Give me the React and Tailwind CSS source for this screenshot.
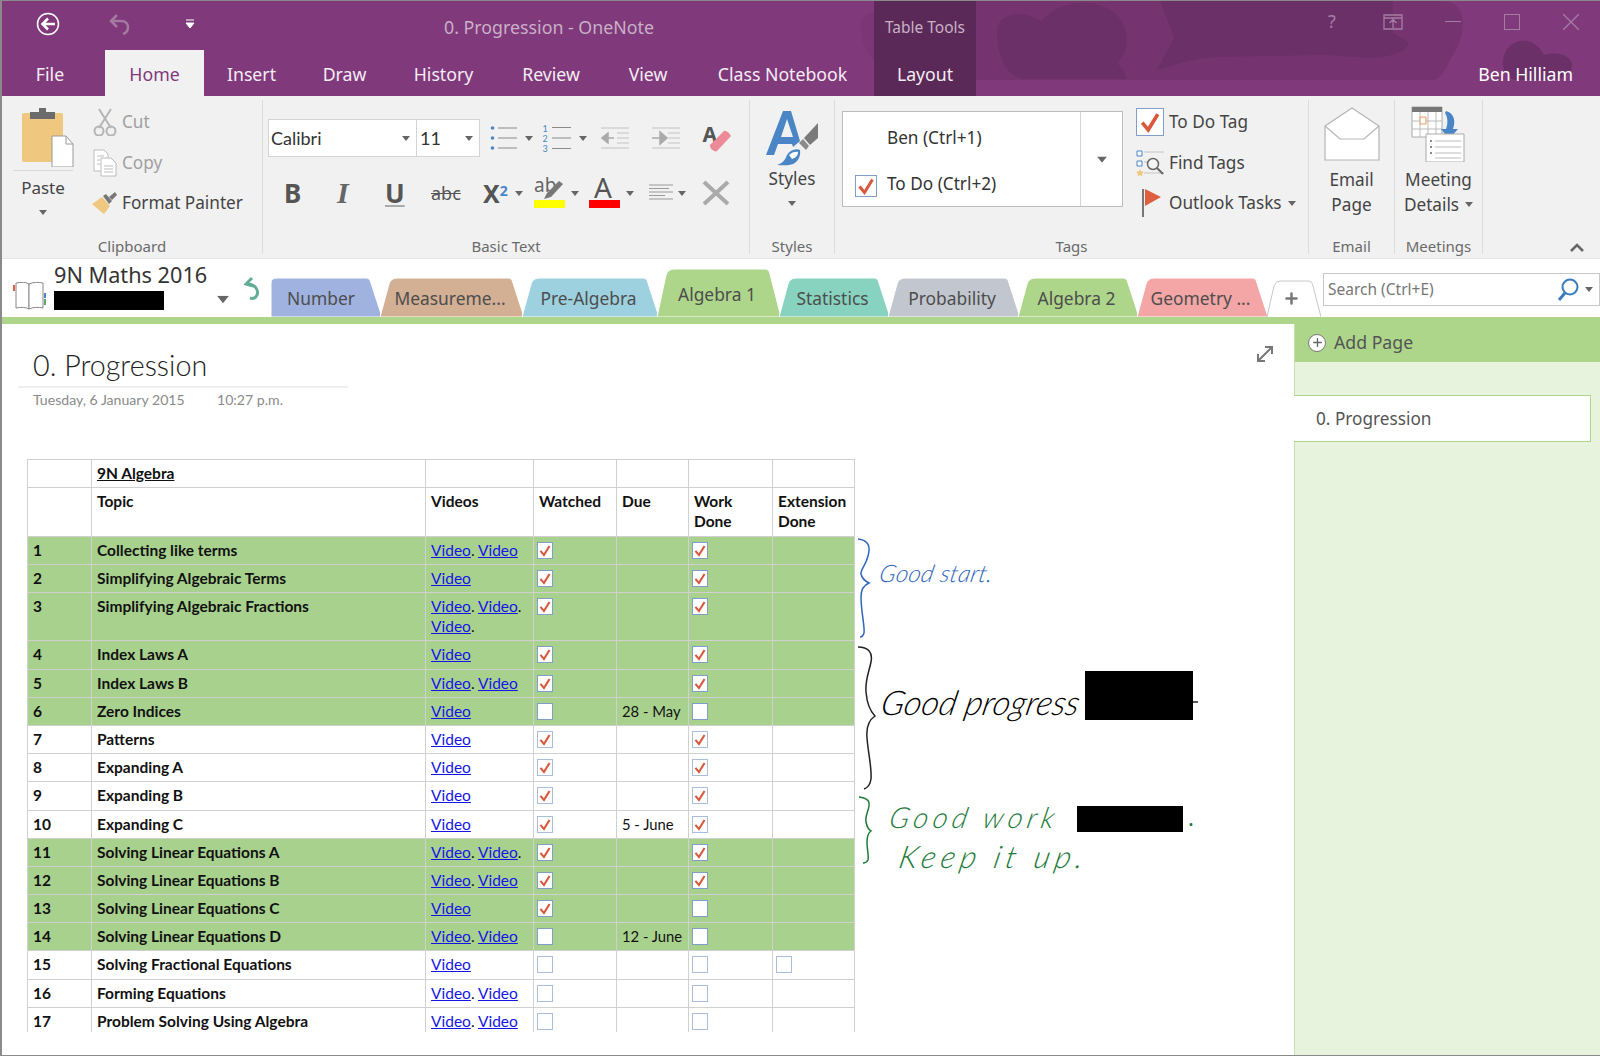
import { Plus } from "lucide-react";

const ribbonTabs = [
  { label: "File", w: "w-[103px] pr-[7px]" },
  { label: "Home", w: "w-[99px]", active: true },
  { label: "Insert", w: "w-[95px]" },
  { label: "Draw", w: "w-[91px]" },
  { label: "History", w: "w-[107px]" },
  { label: "Review", w: "w-[108px]" },
  { label: "View", w: "w-[86px]" },
  { label: "Class Notebook", w: "w-[183px]" },
  { label: "Layout", w: "w-[102px]", context: true },
];

const sectionTabs = [
  { label: "Number", w: "w-[111px]", width: 111, color: "#a0b2e0", first: true },
  { label: "Measureme...", w: "w-[144px]", width: 144, color: "#d3af94" },
  { label: "Pre-Algebra", w: "w-[137px]", width: 137, color: "#9ed1e0" },
  { label: "Algebra 1", w: "w-[124px]", width: 124, color: "#add68a", active: true },
  { label: "Statistics", w: "w-[111px]", width: 111, color: "#88d3bf" },
  { label: "Probability", w: "w-[132px]", width: 132, color: "#c2c6ce" },
  { label: "Algebra 2", w: "w-[121px]", width: 121, color: "#add68a" },
  { label: "Geometry ...", w: "w-[131px]", width: 131, color: "#f3a6a5" },
];

const rows = [
  { n: 1, topic: "Collecting like terms", links: "v,v", w: 1, d: 1, green: true },
  { n: 2, topic: "Simplifying Algebraic Terms", links: "v", w: 1, d: 1, green: true },
  { n: 3, topic: "Simplifying Algebraic Fractions", links: "v,v,v", w: 1, d: 1, green: true, tall: true },
  { n: 4, topic: "Index Laws A", links: "v", w: 1, d: 1, green: true },
  { n: 5, topic: "Index Laws B", links: "v,v", w: 1, d: 1, green: true },
  { n: 6, topic: "Zero Indices", links: "v", w: 0, d: 0, due: "28 - May", green: true },
  { n: 7, topic: "Patterns", links: "v", w: 1, d: 1 },
  { n: 8, topic: "Expanding A", links: "v", w: 1, d: 1 },
  { n: 9, topic: "Expanding B", links: "v", w: 1, d: 1 },
  { n: 10, topic: "Expanding C", links: "v", w: 1, d: 1, due: "5 - June" },
  { n: 11, topic: "Solving Linear Equations A", links: "v,v.", w: 1, d: 1, green: true },
  { n: 12, topic: "Solving Linear Equations B", links: "v,v", w: 1, d: 1, green: true },
  { n: 13, topic: "Solving Linear Equations C", links: "v", w: 1, d: 0, green: true },
  { n: 14, topic: "Solving Linear Equations D", links: "v,v", w: 0, d: 0, due: "12 - June", green: true },
  { n: 15, topic: "Solving Fractional Equations", links: "v", w: 0, d: 0, ext: true },
  { n: 16, topic: "Forming Equations", links: "v,v", w: 0, d: 0 },
  { n: 17, topic: "Problem Solving Using Algebra", links: "v,v", w: 0, d: 0 },
];

function Caret({ className = "" }) {
  return (
    <svg viewBox="0 0 8 5" className={`h-[5px] w-[8px] shrink-0 ${className}`}>
      <path d="M0 0h8L4 5z" fill="#666" />
    </svg>
  );
}

function Check({ className = "" }) {
  return (
    <svg viewBox="0 0 20 20" className={className}>
      <path d="M3.5 10.5l5 6 8-13" fill="none" stroke="#d9573b" strokeWidth="3" />
    </svg>
  );
}

function CheckBox({ checked, light }) {
  return (
    <span className={`block h-[17px] w-[16px] border bg-white ${light ? "border-[#a9bedb]" : "border-[#7f9fc8]"}`}>
      {checked ? <Check className="h-[15px] w-[14px]" /> : null}
    </span>
  );
}

function PasteIcon() {
  return (
    <svg viewBox="0 0 52 60" className="ml-[10px] h-[60px] w-[52px]">
      <rect x="0" y="6" width="41" height="49" rx="2" fill="#efc77e" />
      <path d="M8 12V5h9V1h7v4h9v7z" fill="#6b6b6b" />
      <path d="M30 29h14l7 8v23H30z" fill="#fff" stroke="#9a9a9a" />
      <path d="M44 29v8h7" fill="none" stroke="#9a9a9a" />
    </svg>
  );
}

function ScissorsIcon() {
  return (
    <svg viewBox="0 0 24 28" className="h-[28px] w-[24px]" fill="none" stroke="#b5b5b5" strokeWidth="2">
      <path d="M6 1l12 19M18 1L6 20" />
      <circle cx="6" cy="23" r="4.5" />
      <circle cx="18" cy="23" r="4.5" />
    </svg>
  );
}

function CopyIcon() {
  return (
    <svg viewBox="0 0 24 28" className="h-[28px] w-[24px]" fill="#fff" stroke="#bcbcbc">
      <path d="M1 1h10l4 4v17H1z" />
      <path d="M8 9h10l5 5v13H8z" />
      <path d="M4 7h7M4 11h3M4 15h3M11 17h9M11 20h9M11 23h9" />
    </svg>
  );
}

function BrushIcon() {
  return (
    <svg viewBox="0 0 26 22" className="h-[22px] w-[26px]">
      <path d="M0 12l10-7 8 9-6 8-5-4z" fill="#efc77e" />
      <path d="M11 4l3-2 6 7-3 3z" fill="#777" />
      <path d="M17 5l6-5 2 3-5 5z" fill="#777" />
    </svg>
  );
}

function BulletsIcon() {
  return (
    <svg viewBox="0 0 28 26" className="h-[26px] w-[28px]">
      <g fill="#4a86c5">
        <circle cx="2.5" cy="3" r="1.8" />
        <circle cx="2.5" cy="13" r="1.8" />
        <circle cx="2.5" cy="23" r="1.8" />
      </g>
      <path d="M8 3h19M8 13h19M8 23h19" stroke="#8a8a8a" strokeWidth="1.2" />
    </svg>
  );
}

function NumberingIcon() {
  return (
    <div className="relative h-[28px] w-[28px] text-[#4a86c5]">
      <svg viewBox="0 0 28 28" className="absolute inset-0 h-[28px] w-[28px]">
        <path d="M9 3.500h19M9 14h19M9 24.500h19" stroke="#8a8a8a" strokeWidth="1.2" />
      </svg>
      <div className="flex h-[28px] w-[8px] flex-col justify-between text-[9px] leading-[10px] font-['Lato',sans-serif]">
        <span>1</span>
        <span>2</span>
        <span>3</span>
      </div>
    </div>
  );
}

// both indent buttons keep the arrow on the left of the lines, only its direction differs
function IndentIcon({ out }) {
  return (
    <svg viewBox="0 0 28 22" className="h-[22px] w-[28px]">
      <path d={out ? "M3 11h10M7 6v10l-6-5z" : "M0 11h9M8 5v12l7-6z"} fill="#aaa" stroke="#aaa" strokeWidth="1.5" />
      <path d="M0 1h28M16 6h12M16 11h12M16 16h12M0 21h28" stroke="#c4c4c4" strokeWidth="1.2" />
    </svg>
  );
}

function EraserIcon() {
  return (
    <div className="relative h-[30px] w-[28px]">
      <span className="block text-[21px] font-bold leading-[22px] text-[#555]">A</span>
      <svg viewBox="0 0 28 30" className="absolute inset-0 h-[30px] w-[28px]">
        <path d="M7 22l14-14c2-1 5 2 7 5L14 28c-2 2-8-3-7-6z" fill="#ec8a98" />
      </svg>
    </div>
  );
}

function HighlightBar() {
  return (
    <div className="relative h-[30px] w-[31px]">
      <span className="absolute left-0 top-[-5px] text-[19px] leading-[24px] text-[#666]">ab</span>
      <svg viewBox="0 0 31 24" className="absolute left-0 top-0 h-[24px] w-[31px]">
        <path d="M10 21l3-6 12-12 4 3-12 13z" fill="#777" />
      </svg>
      <span className="absolute bottom-0 left-0 h-[8px] w-[31px] bg-[#ffff00]" />
    </div>
  );
}

function FontColorBar() {
  return (
    <div className="relative h-[30px] w-[31px]">
      <span className="absolute left-[5px] top-[-8px] text-[28px] leading-[34px] text-[#555]">A</span>
      <span className="absolute bottom-0 left-0 h-[8px] w-[31px] bg-[#ff0000]" />
    </div>
  );
}

function AlignIcon() {
  return (
    <svg viewBox="0 0 24 18" className="h-[18px] w-[24px]">
      <path d="M0 1h24M0 4.500h20M0 8h24M0 11.500h16M0 15h24" stroke="#9a9a9a" strokeWidth="1.1" />
    </svg>
  );
}

function ClearIcon() {
  return (
    <svg viewBox="0 0 28 26" className="h-[26px] w-[28px]">
      <path d="M2 2l24 22M26 2L2 24" stroke="#aaa" strokeWidth="4" />
    </svg>
  );
}

function StylesIcon() {
  return (
    <svg viewBox="0 0 52 55" className="h-[55px] w-[52px]">
      <path d="M17 0h8l9 30-7 6-1-3H12l-4 11H0zM21 8l-6 18h12z" fill="#4a86c5" fillRule="evenodd" />
      <path d="M11 54c4-1 8-4 10-10 3-5 9-7 13-5 1 6-2 12-7 14-5 2-11 1-16 1z" fill="#4a86c5" />
      <path d="M23 44c3-3 7-4 9-3 0 4-3 6-6 7z" fill="#fff" />
      <path d="M33 32l4-4 6 7-3 4z" fill="#8a8a8a" />
      <path d="M38 27L52 12v15L44 34z" fill="#7a7a7a" />
    </svg>
  );
}

function FindTagsIcon() {
  return (
    <svg viewBox="0 0 28 26" className="h-[26px] w-[28px] -translate-x-[2px]">
      <path d="M1 1h5v5H1zM1 11h5v5H1z" fill="#fff" stroke="#4a86c5" />
      <path d="M8 2h20M8 12h4M8 23h20" stroke="#c4c4c4" />
      <path d="M4 19l1.200 2.500 2.800.3-2 2 .5 2.700L4 25l-2.500 1.500.5-2.700-2-2 2.800-.3z" fill="#efc77e" />
      <circle cx="17" cy="14" r="5.500" fill="#f4f4f4" stroke="#666" strokeWidth="1.500" />
      <path d="M21 18l6 6" stroke="#666" strokeWidth="2" />
    </svg>
  );
}

function FlagIcon() {
  return (
    <svg viewBox="0 0 20 28" className="h-[28px] w-[20px]">
      <path d="M1 0v28" stroke="#777" strokeWidth="2" />
      <path d="M3 0l16 8-16 9z" fill="#dd5f3f" />
    </svg>
  );
}

function EnvelopeIcon() {
  return (
    <svg viewBox="0 0 56 54" className="h-[54px] w-[56px]" fill="#fff" stroke="#b5b5b5" strokeWidth="1.200">
      <path d="M1 19L28 1l27 18v34H1z" />
      <path d="M1 19l15 13h24l15-13" />
    </svg>
  );
}

function MeetingIcon() {
  return (
    <svg viewBox="0 0 56 56" className="h-[56px] w-[56px]">
      <path d="M1 1h30v30H1z" fill="#fff" stroke="#aaa" />
      <path d="M1 1h30v5H1z" fill="#777" />
      <path d="M1 15h30M1 23h30M9 6v25M17 6v25M25 6v25" stroke="#bbb" />
      <path d="M9 11h6v7H9z" fill="#fff" stroke="#ec9a5c" />
      <path d="M35 5c8 2 10 10 7 18h5l-9 10-8-10h5c2-5 2-12-1-16z" fill="#4a86c5" />
      <path d="M15 28h38v28H15z" fill="#fff" stroke="#aaa" />
      <path d="M24 35h26M24 41h26M24 47h26M24 52h26" stroke="#bbb" />
      <path d="M19 34h2v2h-2zM19 40h2v2h-2zM19 46h2v2h-2z" fill="#888" />
    </svg>
  );
}

function NotebookIcon() {
  return (
    <svg viewBox="0 0 34 28" className="h-[28px] w-[34px] shrink-0">
      <path d="M3 1c5-1 10-1 13 1v25c-3-2-8-2-13-1z" fill="#fff" stroke="#888" />
      <path d="M16 2c4-2 9-2 14-1v25c-5-1-10-1-14 1z" fill="#fff" stroke="#888" />
      <path d="M0 3h2v6H0z" fill="#e25b3d" />
      <path d="M31 11h2v5h-2z" fill="#4a86c5" />
      <path d="M31 17h2v6h-2z" fill="#5fa86a" />
    </svg>
  );
}

function GroupLabel({ children }) {
  return <div className="h-[18px] text-center text-[15px] leading-[20px] text-[#6a6a6a]">{children}</div>;
}

function Group({ width, label, children, last }) {
  return (
    <div className={`my-1 flex flex-col ${width} ${last ? "" : "border-r border-[#dcdcdc]"}`}>
      <div className="h-[136px]">{children}</div>
      <GroupLabel>{label}</GroupLabel>
    </div>
  );
}

function SmallAction({ icon, label, muted, h = "h-[40.500px]", caret }) {
  return (
    <div className={`flex items-center ${h}`}>
      <div className="flex w-[30px] justify-center">{icon}</div>
      <span className={`ml-[2px] whitespace-nowrap text-[17.200px] ${muted ? "text-[#a0a0a0]" : "text-[#444]"}`}>{label}</span>
      {caret ? <Caret className="ml-[6px]" /> : null}
    </div>
  );
}

function SectionTab({ tab, index }) {
  const h = tab.active ? 49 : 40;
  const w = tab.width;
  const left = tab.first ? "M0 " + h + "V6Q0 1 6 1" : "M0 " + h + "L9 7Q11 1 17 1";
  const d = `${left}H${w - 16}Q${w - 12} 1 ${w - 11} 6L${w} ${h}Z`;
  return (
    <div className={`relative flex items-center justify-center ${tab.w} ${tab.active ? "h-[49px]" : "h-[40px]"} ${index === 0 ? "" : "-ml-[2px]"}`}>
      <svg className="absolute inset-0 h-full w-full" viewBox={`0 0 ${w} ${h}`}>
        <path d={d} fill={tab.color} stroke="#fff" strokeWidth="1" />
      </svg>
      <span className={`relative whitespace-nowrap text-[17.400px] text-[#4d4d4d] ${tab.active ? "mt-[4px]" : "mt-[2px]"} ${tab.first ? "-ml-[11px]" : "-ml-[4px]"}`}>{tab.label}</span>
    </div>
  );
}

function VideoLink() {
  return <a className="text-[#1414e6] underline">Video</a>;
}

function VideoLinks({ spec }) {
  if (spec === "v") return <VideoLink />;
  if (spec === "v,v") {
    return (
      <>
        <VideoLink />. <VideoLink />
      </>
    );
  }
  if (spec === "v,v.") {
    return (
      <>
        <VideoLink />. <VideoLink />.
      </>
    );
  }
  return (
    <>
      <VideoLink />. <VideoLink />. <VideoLink />.
    </>
  );
}

function ProgressTable() {
  const cell = "border border-[#d0d0d0] px-[5px] pt-[3px] align-top";
  const boxCell = "border border-[#d0d0d0] pl-[3px] pt-[5px] align-top";
  return (
    <table className="w-[827px] table-fixed border-collapse text-[15.500px] leading-[20px] text-[#111]">
      <colgroup>
        <col className="w-[64px]" />
        <col className="w-[334px]" />
        <col className="w-[108px]" />
        <col className="w-[83px]" />
        <col className="w-[72px]" />
        <col className="w-[84px]" />
        <col className="w-[82px]" />
      </colgroup>
      <tbody>
        <tr className="h-[28px]">
          <td className={cell} />
          <td className={`${cell} font-bold underline`}>9N Algebra</td>
          <td className={cell} />
          <td className={cell} />
          <td className={cell} />
          <td className={cell} />
          <td className={cell} />
        </tr>
        <tr className="h-[49px] font-bold">
          <td className={cell} />
          <td className={cell}>Topic</td>
          <td className={cell}>Videos</td>
          <td className={cell}>Watched</td>
          <td className={cell}>Due</td>
          <td className={cell}>Work<br />Done</td>
          <td className={cell}>Extension<br />Done</td>
        </tr>
        {rows.map((row) => (
          <tr key={row.n} className={`${row.tall ? "h-[48px]" : "h-[28.200px]"} ${row.green ? "bg-[#a9d18e]" : "bg-white"}`}>
            <td className={`${cell} font-bold`}>{row.n}</td>
            <td className={`${cell} whitespace-nowrap font-bold`}>{row.topic}</td>
            <td className={cell}><VideoLinks spec={row.links} /></td>
            <td className={boxCell}><CheckBox checked={row.w} light={!row.green} /></td>
            <td className={`${cell} whitespace-nowrap text-[14.800px]`}>{row.due}</td>
            <td className={boxCell}><CheckBox checked={row.d} light={!row.green} /></td>
            <td className={boxCell}>{row.ext ? <CheckBox light /> : null}</td>
          </tr>
        ))}
      </tbody>
    </table>
  );
}

export default function App() {
  return (
    <div className="flex h-[1056px] w-[1600px] flex-col overflow-hidden border-b border-l-2 border-t border-[#8a8a8a] bg-white font-['Noto_Sans',sans-serif]">
      {/* title bar and tabs */}
      <header className="relative h-[95px] shrink-0 bg-[#80397b]">
        <svg className="absolute inset-0 h-full w-full" viewBox="0 0 1598 95">
          <path d="M974 0H1440C1470 0 1462 40 1450 55C1445 65 1440 79 1430 79H974z" fill="#753470" />
          <path d="M995 30C995 12 1020 8 1040 20C1060-8 1125-6 1125 40C1125 52 1118 58 1115 62C1122 68 1125 78 1125 78H1020C1000 72 995 50 995 30z" fill="#6c3069" />
          <path d="M1158 0L1172 37L1154 70C1175 62 1200 56 1219 56L1325 54C1350 56 1370 58 1382 56C1400 52 1410 46 1405 40L1391 32V0z" fill="#6c3069" />
          <path d="M860 18c8-8 14-8 14-8v50c-8-4-18-24-14-42z" fill="#7a3675" />
          <path d="M1501 62C1501 45 1515 38 1525 40C1535 42 1540 50 1542 54C1555 50 1570 55 1570 64C1570 72 1560 79 1550 79H1512C1505 75 1501 70 1501 62z" fill="#6c3069" />
        </svg>
        <div className="relative flex h-[49px] items-center text-[#c9b0c7]">
          <svg viewBox="0 0 24 24" className="ml-[34px] -mt-[4px] h-[24px] w-[24px]" fill="none" stroke="#fff" strokeWidth="1.500">
            <circle cx="12" cy="12" r="10.500" />
            <path d="M19 12H7M12 6.500L6.500 12l5.500 5.500" strokeWidth="2.500" />
          </svg>
          <svg viewBox="0 0 22 22" className="ml-[49px] -mt-[4px] h-[22px] w-[22px]" fill="none" stroke="#a47aa0" strokeWidth="2.500">
            <path d="M8 2L2 8l6 6M2 8h10c5 0 7 3 7 6s-2 6-5 7" />
          </svg>
          <svg viewBox="0 0 10 10" className="ml-[54px] -mt-[4px] h-[10px] w-[10px]">
            <path d="M1 1h8M1 4h8L5 9z" fill="#fff" stroke="#fff" strokeWidth="1" />
          </svg>
          <div className="ml-[249px] w-[430px] whitespace-nowrap pt-[4px] text-[17.800px]">0. Progression - OneNote</div>
          <div className="flex h-full w-[102px] items-center justify-center bg-[#5b2957] pt-[4px] text-[15.500px]">Table Tools</div>
          <div className="ml-[352px] -mt-[8px] flex items-center">
            <span className="text-[18px] text-[#a57ca2]">?</span>
            <svg viewBox="0 0 20 16" className="ml-[47px] h-[16px] w-[20px]" fill="none" stroke="#a57ca2" strokeWidth="1.300">
              <path d="M1 1h18v14H1zM1 4h18M10 14V6M6.500 9L10 5.500 13.500 9" />
            </svg>
            <span className="ml-[42px] block h-[1.500px] w-[16px] bg-[#a57ca2]" />
            <span className="ml-[43px] block h-[16px] w-[16px] border-[1.500px] border-[#a57ca2]" />
            <svg viewBox="0 0 16 16" className="ml-[43px] h-[16px] w-[16px]" stroke="#a57ca2" strokeWidth="1.300">
              <path d="M0 0l16 16M16 0L0 16" />
            </svg>
          </div>
        </div>
        <nav className="relative flex h-[46px] items-stretch text-[17.700px] text-[#f4edf4]">
          {ribbonTabs.map((tab) => (
            <div
              key={tab.label}
              className={`flex items-center justify-center whitespace-nowrap pt-[2px] ${tab.w} ${tab.active ? "bg-[#f1f1f1] text-[#80397b]" : ""} ${tab.context ? "bg-[#5b2957]" : ""}`}
            >
              {tab.label}
            </div>
          ))}
          <div className="ml-auto flex items-center whitespace-nowrap pr-[27px] pt-[2px] text-white">Ben Hilliam</div>
        </nav>
      </header>

      {/* ribbon */}
      <section className="flex h-[162px] shrink-0 bg-[#f1f1f1]">
        <Group width="w-[261px]" label="Clipboard">
          <div className="flex">
            <div className="flex w-[88px] shrink-0 flex-col items-center pr-[6px] pt-[7px]">
              <PasteIcon />
              <div className="mt-[3px] w-[60px] border-t border-[#d8d8d8] pt-[4px] text-center text-[17px] leading-[26px] text-[#444]">Paste</div>
              <Caret className="mt-[9px]" />
            </div>
            <div className="pt-[2px]">
              <SmallAction icon={<ScissorsIcon />} label="Cut" muted />
              <SmallAction icon={<CopyIcon />} label="Copy" muted />
              <SmallAction icon={<BrushIcon />} label="Format Painter" />
            </div>
          </div>
        </Group>

        <Group width="w-[487px]" label="Basic Text">
          <div className="flex items-center pl-[5px] pt-[19px]">
            <div className="flex h-[38px] w-[149px] items-center justify-between border border-[#d4d4d4] bg-white pl-[2px] pr-[6px] text-[18px] text-[#333] font-['Lato',sans-serif]">
              Calibri
              <Caret />
            </div>
            <div className="flex h-[38px] w-[63px] items-center justify-between border border-l-0 border-[#d4d4d4] bg-white pl-[3px] pr-[6px] text-[18px] text-[#333] font-['Lato',sans-serif]">
              11
              <Caret />
            </div>
            <div className="ml-[9.500px]"><BulletsIcon /></div>
            <Caret className="ml-[7px]" />
            <div className="ml-[10px]"><NumberingIcon /></div>
            <Caret className="ml-[8px]" />
            <div className="ml-[14px]"><IndentIcon out /></div>
            <div className="ml-[23px]"><IndentIcon /></div>
            <div className="ml-[23px]"><EraserIcon /></div>
          </div>
          <div className="mt-[18px] flex h-[36px] items-center pl-[5px] text-[#555]">
            <span className="ml-[16px] w-[17px] text-[26px] font-bold leading-none">B</span>
            <span className="ml-[36px] w-[14px] text-[30px] font-bold italic leading-none text-[#666] font-['Liberation_Serif',serif]">I</span>
            <span className="ml-[34px] w-[18px] text-[26px] font-bold leading-none underline decoration-[#aaa]">U</span>
            <span className="ml-[28px] w-[30px] text-[18px] leading-none line-through">abc</span>
            <span className="ml-[22px] w-[26px] text-[25px] font-bold leading-none">X<sup className="text-[14px] font-bold text-[#4a86c5]">2</sup></span>
            <Caret className="ml-[6px]" />
            <div className="ml-[11px]"><HighlightBar /></div>
            <Caret className="ml-[6px]" />
            <div className="ml-[10px]"><FontColorBar /></div>
            <Caret className="ml-[6px]" />
            <div className="ml-[15px]"><AlignIcon /></div>
            <Caret className="ml-[5px]" />
            <div className="ml-[16px]"><ClearIcon /></div>
          </div>
        </Group>

        <Group width="w-[85px]" label="Styles">
          <div className="flex flex-col items-center pt-[11px]">
            <StylesIcon />
            <div className="text-[17.200px] text-[#444]">Styles</div>
            <Caret className="mt-[9px]" />
          </div>
        </Group>

        <Group width="w-[474px]" label="Tags">
          <div className="flex pl-[7px] pt-[11px]">
            <div className="flex h-[96px] w-[281px] border border-[#bcbcbc] bg-white text-[17.200px] text-[#333]">
              <div className="w-[238px] border-r border-[#d4d4d4] pl-[44px]">
                <div className="flex h-[46px] items-center pt-[6px]">Ben (Ctrl+1)</div>
                <div className="relative flex h-[46px] items-center pt-[6px]">
                  <span className="absolute -ml-[32px] mt-[3px] flex h-[22px] w-[22px] items-center justify-center border border-[#7f9fc8] bg-white">
                    <Check className="h-[20px] w-[20px]" />
                  </span>
                  To Do (Ctrl+2)
                </div>
              </div>
              <div className="flex flex-1 items-center justify-center"><Caret className="scale-125" /></div>
            </div>
            <div className="ml-[14px] -mt-[9px]">
              <SmallAction
                icon={
                  <span className="flex h-[28px] w-[28px] -translate-x-[2px] items-center justify-center border border-[#7f9fc8] bg-white">
                    <Check className="h-[24px] w-[24px]" />
                  </span>
                }
                label="To Do Tag"
              />
              <SmallAction icon={<FindTagsIcon />} label="Find Tags" />
              <SmallAction icon={<FlagIcon />} label="Outlook Tasks" caret />
            </div>
          </div>
        </Group>

        <Group width="w-[86px]" label="Email">
          <div className="flex flex-col items-center pt-[7px] text-[17.200px] leading-[25px] text-[#444]">
            <EnvelopeIcon />
            <div className="mt-[6px]">Email</div>
            <div>Page</div>
          </div>
        </Group>

        <Group width="w-[88px]" label="Meetings">
          <div className="flex flex-col items-center pt-[6px] text-[17.200px] leading-[25px] text-[#444]">
            <MeetingIcon />
            <div className="mt-[5px]">Meeting</div>
            <div className="flex items-center">Details<Caret className="ml-[6px]" /></div>
          </div>
        </Group>

        <div className="flex flex-1 items-end justify-end pb-[6px] pr-[16px]">
          <svg viewBox="0 0 14 9" className="h-[9px] w-[14px]" fill="none" stroke="#666" strokeWidth="2.500">
            <path d="M1 8l6-6 6 6" />
          </svg>
        </div>
      </section>

      {/* notebook and section tabs */}
      <div className="flex h-[59px] shrink-0 items-end border-t border-[#e6e6e6]">
        <div className="flex h-full w-[269px] shrink-0 items-end pb-[7px] pl-[11px]">
          <NotebookIcon />
          <div className="ml-[7px] w-[151px] shrink-0">
            <div className="whitespace-nowrap text-[21.700px] leading-[28px] text-[#333]">9N Maths 2016</div>
            <div className="mt-[2px] h-[19px] w-[110px] bg-black" />
          </div>
          <Caret className="mb-[8px] ml-[14px] scale-150" />
          <svg viewBox="0 0 16 24" className="mb-[10px] ml-[17px] h-[24px] w-[16px] shrink-0" fill="none" stroke="#62ad95" strokeWidth="3">
            <path d="M8 2L2 8l7 2M3 8c8 0 12 6 10 11-1 3-4 4-7 3" />
          </svg>
        </div>
        {sectionTabs.map((tab, i) => (
          <SectionTab key={tab.label} tab={tab} index={i} />
        ))}
        <div className="relative -ml-[1px] flex h-[37px] w-[54px] items-center justify-center">
          <svg className="absolute inset-0 h-full w-full" viewBox="0 0 54 37">
            <path d="M0 37L7 6Q9 1 13 1H41Q45 1 46 6L54 37" fill="#fff" stroke="#c8c8c8" />
          </svg>
          <Plus className="relative h-[17px] w-[17px] -translate-x-[3px] text-[#777]" strokeWidth={3.500} />
        </div>
        <div className="mb-[11px] ml-[2px] flex h-[33px] flex-1 items-center border border-[#c8c8c8] bg-white pl-[4px] pr-[6px] text-[15.500px] text-[#777]">
          Search (Ctrl+E)
          <svg viewBox="0 0 22 24" className="ml-auto h-[24px] w-[22px]" fill="none" stroke="#3a7dbd" strokeWidth="2">
            <circle cx="13" cy="9" r="7.500" />
            <path d="M8 15l-6 7" strokeWidth="3" />
          </svg>
          <Caret className="ml-[6px]" />
        </div>
      </div>

      <div className="h-[7px] shrink-0 bg-[#add68a]" />

      {/* page and page list */}
      <main className="flex min-h-0 flex-1">
        <article className="relative w-[1292px] shrink-0">
          <div className="flex h-[135px] flex-col">
            <div className="ml-[16px] mt-[20px] w-[330px] border-b-2 border-[#efefef] pl-[15px] text-[28.700px] font-light leading-[42px] text-[#222] font-['Lato',sans-serif]">
              0. Progression
            </div>
            <div className="ml-[31px] mt-[2px] flex text-[14.100px] leading-[20px] text-[#8a8a8a] font-['Lato',sans-serif]">
              <span className="w-[184px]">Tuesday, 6 January 2015</span>
              <span>10:27 p.m.</span>
            </div>
          </div>
          <div className="ml-[25px] h-[573px] overflow-hidden font-['Lato',sans-serif]">
            <ProgressTable />
          </div>

          <svg viewBox="0 0 20 20" className="absolute right-[19px] top-[20px] h-[20px] w-[20px]" fill="none" stroke="#777" strokeWidth="2">
            <path d="M3 17L17 3M10 3h7v7M3 10v7h7" />
          </svg>

          {/* ink over the page: braces, notes and redactions */}
          <svg className="absolute left-0 top-0 h-[732px] w-[1292px]" viewBox="0 324 1292 732" fill="none" strokeWidth="1.500">
            <path d="M856 539C866 540 869 546 866 556C864 565 858 570 859 574C860 579 865 582 867 583C862 585 859 590 859 597C859 612 863 626 862 633C861 636 860 637 858 637" stroke="#2f65bd" />
            <path d="M856 647C866 647 871 652 869 662C867 672 863 680 864 692C865 704 868 711 873 716C867 720 864 727 865 738C866 752 870 768 869 779C868 786 865 788 862 789" stroke="#222" />
            <path d="M857 797C864 798 868 800 867 806C866 812 863 816 864 822C865 827 867 830 869 831C866 833 865 836 865 842C865 850 867 856 866 860C865 862 863 863 861 863" stroke="#1e7b3a" />
            <path d="M1191 702h5" stroke="#222" />
          </svg>
          <div className="absolute left-[878px] top-[231px] -skew-x-12 whitespace-nowrap text-[24px] font-light italic leading-[36px] tracking-[0.300px] text-[#2f65bd] font-['Lato',sans-serif]">Good start.</div>
          <div className="absolute left-[880px] top-[355px] -skew-x-12 whitespace-nowrap text-[34px] font-light italic leading-[46px] text-black font-['Lato',sans-serif]">Good progress</div>
          <div className="absolute left-[1083px] top-[347px] h-[49px] w-[108px] bg-black" />
          <div className="absolute left-[888px] top-[475px] -skew-x-12 whitespace-nowrap text-[29px] font-light italic leading-[36px] tracking-[4.500px] text-[#1e7b3a] font-['Lato',sans-serif]">Good work</div>
          <div className="absolute left-[1075px] top-[482px] h-[26px] w-[106px] bg-black" />
          <div className="absolute left-[1186px] top-[478px] text-[22px] leading-[30px] text-[#1e7b3a]">.</div>
          <div className="absolute left-[898px] top-[514px] -skew-x-12 whitespace-nowrap text-[31px] font-light italic leading-[36px] tracking-[5px] text-[#1e7b3a] font-['Lato',sans-serif]">Keep it up.</div>
        </article>

        <aside className="flex-1 border-l border-[#c7e0b0] bg-[#e8f3de]">
          <div className="-mt-[1px] flex h-[39px] items-center bg-[#add68a] pl-[13px] text-[17.700px] text-[#555]">
            <span className="flex h-[18px] w-[18px] items-center justify-center rounded-full border border-[#777] bg-white">
              <Plus className="h-[13px] w-[13px] text-[#666]" strokeWidth={2.500} />
            </span>
            <span className="ml-[8px]">Add Page</span>
          </div>
          <div className="-ml-[1px] mt-[33px] flex h-[47px] w-[297px] items-center border border-l-0 border-[#add68a] bg-white pl-[22px] text-[17.200px] text-[#555]">
            0. Progression
          </div>
        </aside>
      </main>
    </div>
  );
}
